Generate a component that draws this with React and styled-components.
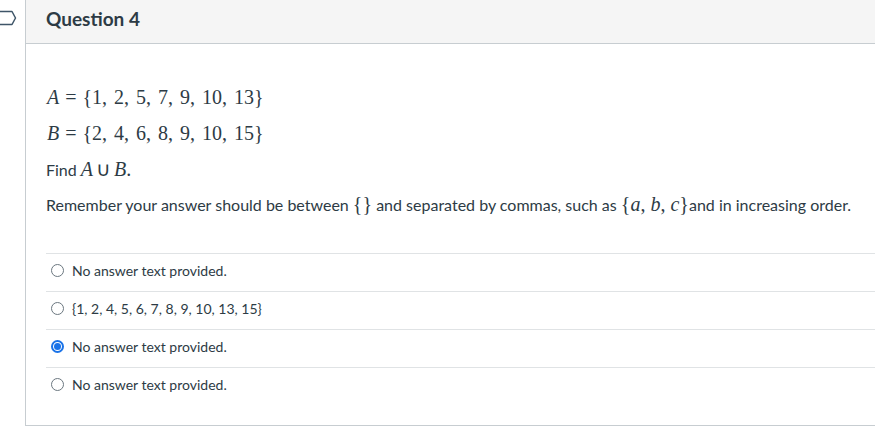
import React, { useState } from 'react';
import styled, { createGlobalStyle } from 'styled-components';

const GlobalStyle = createGlobalStyle`
  body {
    margin: 0;
    background: #fff;
    font-family: Lato, "Liberation Sans", sans-serif;
    color: #2d3b45;
  }
`;

const Page = styled.div`
  display: flex;
  width: 875px;
  height: 429px;
  overflow: hidden;
`;

const Gutter = styled.div`
  width: 25px;
  flex: none;
  padding-top: 10px;
`;

const Panel = styled.section`
  flex: 1;
  border-left: 1px solid #c7cdd1;
  border-bottom: 1px solid #c7cdd1;
  height: 426px;
  box-sizing: border-box;
  display: flex;
  flex-direction: column;
`;

const Header = styled.header`
  height: 44px;
  box-sizing: border-box;
  background: #f5f5f5;
  border-bottom: 1px solid #c7cdd1;
  padding: 6px 20px 0;
`;

const Title = styled.h2`
  margin: 0;
  font-size: 19px;
  line-height: 26px;
  font-weight: 700;
  color: #2d3b45;
`;

const Body = styled.div`
  padding: 41px 0 0 20px;
`;

const MathLine = styled.p`
  margin: 0 0 12px 1px;
  font-family: "Liberation Serif", serif;
  font-size: 20px;
  line-height: 24px;
  word-spacing: 2px;
`;

const Var = styled.i`
  font-style: italic;
`;

const Op = styled.span`
  margin: 0 ${(p) => p.space || 6}px;
`;

const Text = styled.p`
  margin: ${(p) => p.top || 0}px 0 0;
  font-size: 16px;
  line-height: 24px;
`;

const InlineMath = styled.span`
  font-family: "Liberation Serif", serif;
  font-size: 20px;
`;

const Answers = styled.div`
  margin-top: 36px;
  display: flex;
  flex-direction: column;
`;

const Row = styled.label`
  height: 38px;
  box-sizing: border-box;
  border-top: 1px solid #e0e3e5;
  display: flex;
  align-items: center;
  gap: 8px;
  padding: 0 0 4px 5px;
  font-size: 14px;
  color: #2d3b45;
  cursor: pointer;
`;

const Radio = styled.span`
  width: 13px;
  height: 13px;
  box-sizing: border-box;
  border-radius: 50%;
  border: 1px solid ${(p) => (p.checked ? '#1a73e8' : '#6b7780')};
  display: flex;
  align-items: center;
  justify-content: center;
  &::after {
    content: '';
    width: 7px;
    height: 7px;
    border-radius: 50%;
    background: ${(p) => (p.checked ? '#1a73e8' : 'transparent')};
  }
  ${(p) => p.checked && 'border-width: 2px;'}
`;

const FlagIcon = () => (
  <svg width="18" height="16" viewBox="0 0 18 16">
    <path
      d="M-2 1.5 H12 L15.5 8 L12 14.5 H-2"
      fill="none"
      stroke="#3e5568"
      strokeWidth="1.5"
      strokeLinejoin="round"
    />
  </svg>
);

const answers = [
  'No answer text provided.',
  '{1, 2, 4, 5, 6, 7, 8, 9, 10, 13, 15}',
  'No answer text provided.',
  'No answer text provided.',
];

const App = () => {
  const [selected, setSelected] = useState(2);

  return (
    <Page>
      <GlobalStyle />
      <Gutter>
        <FlagIcon />
      </Gutter>
      <Panel>
        <Header>
          <Title>Question 4</Title>
        </Header>
        <Body>
          <MathLine>
            <Var>A</Var>
            <Op>=</Op>
            {'{1, 2, 5, 7, 9, 10, 13}'}
          </MathLine>
          <MathLine>
            <Var>B</Var>
            <Op>=</Op>
            {'{2, 4, 6, 8, 9, 10, 15}'}
          </MathLine>
          <Text>
            Find{' '}
            <InlineMath>
              <Var>A</Var>
              <Op space={3}>∪</Op>
              <Var>B</Var>.
            </InlineMath>
          </Text>
          <Text top={10}>
            Remember your answer should be between <InlineMath>{'{}'}</InlineMath> and separated
            by commas, such as{' '}
            <InlineMath>
              {'{'}
              <Var>a</Var>, <Var>b</Var>, <Var>c</Var>
              {'}'}
            </InlineMath>
            and in increasing order.
          </Text>
          <Answers>
            {answers.map((a, i) => (
              <Row key={i} onClick={() => setSelected(i)}>
                <Radio checked={selected === i} />
                {a}
              </Row>
            ))}
          </Answers>
        </Body>
      </Panel>
    </Page>
  );
};

export default App;
